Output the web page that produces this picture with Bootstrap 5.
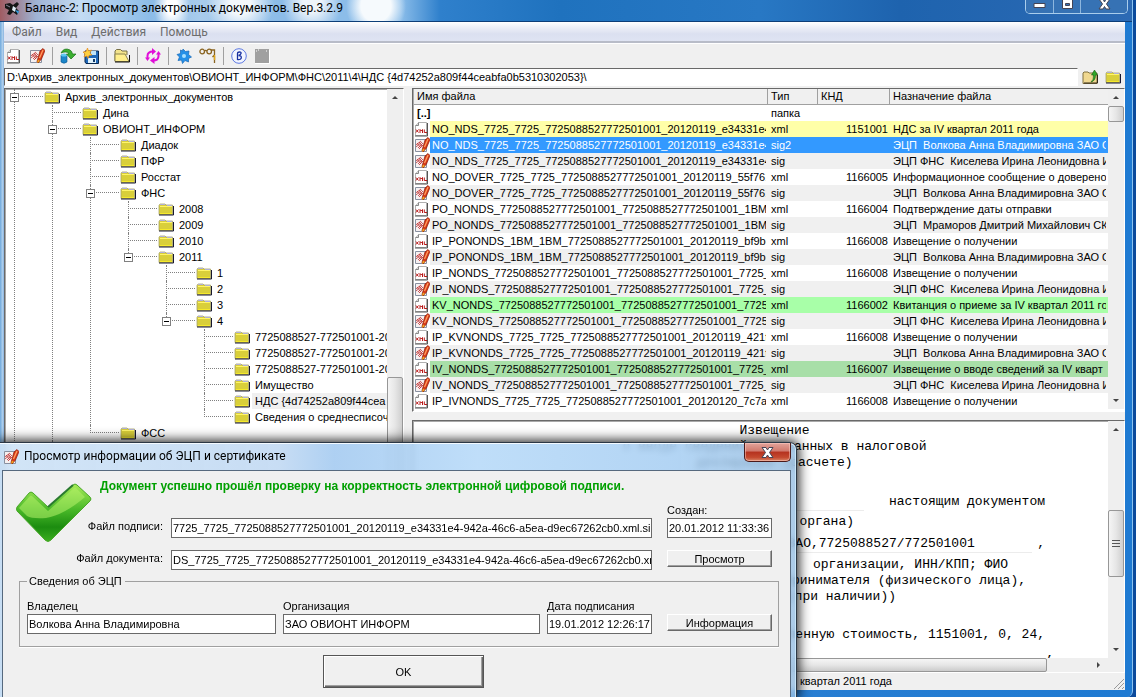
<!DOCTYPE html>
<html lang="ru">
<head>
<meta charset="utf-8">
<meta name="viewport" content="width=device-width, initial-scale=1">
<title>Баланс-2: Просмотр электронных документов</title>
<link href="https://cdn.jsdelivr.net/npm/bootstrap@5.3.0/dist/css/bootstrap.min.css" rel="stylesheet">
<style>
:root{--face:#f0f0f0;--dark:#696969;--mid:#a0a0a0}
body{font:11px/16px "Liberation Sans",Arial,sans-serif;color:#000;background:#0b4a9c}
svg{display:block;flex:none}
.app-window{height:100vh;margin-right:3px;padding:0 7px 7px 4px;border-right:1px solid #8cc4f0;border-radius:0 0 6px 0;
 background:linear-gradient(90deg,#6fa9dc 0,#b8d4ee 3px,#2b73c4 5px,#2b7fd2 60%,#1e7ad2 100%)}
.app-title{height:22px;margin:0 -7px 0 -4px;padding-left:4px;font:12px/17px Roboto,"Noto Sans",sans-serif;border-bottom:1px solid #0d3e78;
 background:radial-gradient(ellipse 18px 30px at 172px 6px,#fff 30%,transparent),radial-gradient(ellipse 34px 34px at 240px 4px,#f4f8fc 30%,transparent),
 radial-gradient(ellipse 30px 34px at 312px 2px,#eef4fa 30%,transparent),radial-gradient(ellipse 30px 32px at 376px 6px,#f6fafd 50%,transparent),
 linear-gradient(90deg,#a05c62 0,#9fb3d4 36px,#c4dcf4 80px,#8cbce8 150px,#a8ccec 200px,#8cbce8 280px,#8cbeea 400px,#2f80cc 440px,#1f72be 560px,#2878c4 760px,#1e63ae 900px,#2c6ab4 100%)}
.win-ctl{height:14px;margin-right:4px;border:1px solid #a9cdec;border-top:0;border-radius:0 0 5px 5px;overflow:hidden}
.win-ctl button{border:0;padding:0 0 4px;background:#3672b4;border-left:1px solid #8db6de;width:27px;display:flex;align-items:center;justify-content:center}
.win-ctl button:first-child{border-left:0}
.win-ctl button:last-child{width:47px}
.app-client{background:var(--face);min-height:0}
.app-menu{height:21px;background:linear-gradient(#fff 0,#eef0f8 5px,#dbe0f0 12px,#dfe4f3 100%);border-bottom:2px solid #b8bcc8;font:12px/20px Roboto,"Noto Sans",sans-serif}
.app-menu a{color:#6d6d6d;text-decoration:none}
.toolbar{height:25px;border-top:1px solid #fff;gap:7px}
.toolbar button,.ico-btn{border:0;background:none;padding:0}
.tsep{width:1px;height:18px;background:var(--mid)}
.path-box{height:18px;border:1px solid;border-color:var(--dark) #fff #fff var(--dark);background:#fff;padding:0 2px;outline:0;color:#000}
.sunken{background:#fff;border:1px solid;border-color:var(--dark) #fff #fff var(--dark);box-shadow:inset 1px 1px 0 #a9a9a9}
.tree-pane{width:400px}
.vbar{width:16px;background:#efefef;flex:none}
.arrow-up,.arrow-down,.arrow-right{width:16px;height:17px;display:flex;align-items:center;justify-content:center}
.arrow-up::before,.arrow-down::before,.arrow-right::before{content:"";border:3px solid transparent;border-top-width:0;border-bottom-color:#444}
.arrow-down::before{border-width:3px 3px 0;border-color:#444 transparent transparent}
.arrow-right::before{border-width:3px 0 3px 3px;border-color:transparent transparent transparent #444}
.thumb-v{border:1px solid #979797;border-radius:2px;background:linear-gradient(90deg,#f5f5f5,#e6e6e6 50%,#cfcfcf)}
.thumb-h{border:1px solid #979797;border-radius:2px;background:linear-gradient(#f5f5f5,#e6e6e6 50%,#cbcbcb);height:14px}
/* tree */
.tree-list{list-style:none;margin:0;padding:0}
.tree-list .tree-list{padding-left:38px}
.tree-list li{position:relative}
.tree-list li::before{content:"";position:absolute;left:9px;top:0;bottom:0;border-left:1px dotted #808080}
.tree-list .tree-list li:last-child::before{bottom:auto;height:8px}
.node-row{display:flex;height:16px;padding-left:9px;white-space:nowrap}
.node-row::before{content:"";width:29px;height:8px;border-bottom:1px dotted #808080;flex:none;margin-right:1px}
.node-row span{padding:0 3px;margin-left:2px;line-height:16px}
.node-row .picked{background:#f0f0f0;flex:1}
.has-kids>.node-row::after{content:"";position:absolute;left:5px;top:4px;width:9px;height:9px;border:1px solid #808080;
 background:linear-gradient(#000,#000) center/5px 1px no-repeat #fff}
/* file list */
.files{table-layout:fixed;width:100%;border-collapse:separate;border-spacing:0;white-space:pre}
.files th,.files td{height:16px;line-height:15px;padding:0 0 0 3px;overflow:hidden;font-weight:400}
.files td{border-right:2px solid transparent}
.files th{background:var(--face);border-right:1px solid var(--mid);border-bottom:1px solid var(--mid);padding-left:3px}
.files th:last-child{border-right:0}
.files td:first-child{padding:0;border-right:0}
.files td:nth-child(2){padding-left:2px}
.files td:nth-child(4){text-align:right}
.files .up-dir td{padding-left:3px}
.files .s td+td{background:#f0f0f0}
.files .y td+td{background:#ffffa8}
.files .sel td+td{background:#3399ff;color:#fff}
.files .g td+td{background:#a8ffa8}
.files .dg td+td{background:#a8dfa8}
/* document */
.doc-pane{min-height:0;min-width:0}
.doc-text{font:13px/16px "Liberation Mono","Courier New",monospace;padding:2px 0 0;overflow:hidden;min-width:0}
.doc-head,.doc-line{white-space:pre}
.doc-head{padding-left:28px;text-align:center}
.doc-line{text-align:right}
.ruled{border-bottom:1px solid #ececec}
.end-s{padding-right:63px}.end-m{padding-right:82px}.end-l{padding-right:100px}.end-xl{padding-right:212px}.end-xs{padding-right:54px}
/* dialog */
.sig-dialog{position:absolute;left:0;bottom:0;width:797px;border:1px solid #2c3846;border-left:0;border-bottom:0;border-radius:0 7px 0 0;padding:0 5px 0 2px;
 background:linear-gradient(90deg,rgba(205,226,246,.9) 0,rgba(190,215,242,.85) 35%,rgba(160,200,240,.85) 42%,rgba(180,216,248,.85) 60%,rgba(165,205,242,.85) 85%,rgba(150,190,226,.8) 100%);
 backdrop-filter:blur(3px);box-shadow:0 0 12px 2px rgba(0,0,0,.85),inset 0 1px 0 #f4faff,inset -1px 0 0 #c8e6fa}
.dlg-title{height:27px;font:12px/27px Roboto,"Noto Sans",sans-serif}
.dlg-close{width:47px;height:19px;border:1px solid #4b1a1a;border-top:0;border-radius:0 0 5px 5px;padding:0;
 background:linear-gradient(#e3a49b 0,#d0786c 45%,#b5321f 50%,#c4492f 80%,#d98668);box-shadow:inset 0 0 0 1px rgba(255,210,200,.5)}
.dlg-body{background:var(--face);border:1px solid #56697e;border-bottom:0;padding-bottom:9px}
.dlg-grid{display:grid;grid-template:16px 24px 20px 32px/147px 488px 105px;padding:7px 0 0 13px;column-gap:8px}
.dlg-grid .fit{margin-right:7px}
.ok-text{grid-area:1/1/2/4;padding-left:84px;color:#00a000;font-weight:700;font-size:12px}
.tick{grid-area:1/1/5/2;margin-top:4px}
.fld{border:1px solid var(--dark);background:#fff;height:20px;padding:0 0 0 1px;outline:0;color:#000;min-width:0;width:100%;line-height:18px}
.flat3d{height:17px;width:100%;border:1px solid;border-color:#fff var(--dark) var(--dark) #fff;background:var(--face);box-shadow:inset -1px -1px 0 var(--mid);padding:0;line-height:14px;color:#000}
.sig-group{margin:3px 11px 0 16px;border:1px solid var(--mid);padding:9px 6px 12px 7px;box-shadow:0 1px 0 #fff}
.sig-group legend{float:none;width:auto;font-size:11px;line-height:16px;margin:0;padding:0 3px 0 2px}
.sig-cols{display:grid;grid-template-columns:249px 257px 105px 105px;column-gap:7px}
.sig-cols>:last-child{margin-left:8px;width:105px}
.ok-btn{width:161px;height:33px;border:1px solid #555;background:var(--face);box-shadow:inset 1px 1px 0 #fff,inset -1px -1px 0 #696969,inset -2px -2px 0 #a0a0a0;margin-left:320px;color:#000}
</style>
</head>
<body class="vh-100 overflow-hidden position-relative">

<svg width="0" height="0" class="position-absolute" aria-hidden="true">
 <symbol id="i-folder" viewBox="0 0 16 16">
  <path d="M1 4.500L2 3h5l1 1h6.500v9.500H1z" fill="#d9cf3a" stroke="#a8a468" stroke-width=".8"/>
  <path d="M2 3.500h5M9 4.500h5" stroke="#b0b0d8"/><path d="M2 5.500h12" stroke="#fff56a"/>
  <path d="M2 12.500h12" stroke="#f6ea2a"/><path d="M1 14h14.500V5" fill="none" stroke="#181830"/>
 </symbol>
 <symbol id="i-xml" viewBox="0 0 16 16">
  <path d="M1.500 4.500l3-3h8v13h-11z" fill="#fff" stroke="#b0b0b0"/><path d="M1.500 4.500h3v-3" fill="#ddd" stroke="#888"/><path d="M13.500 2v13H1" fill="none" stroke="#555"/>
  <path d="M2 8.500l2.500 3M4.500 8.500L2 11.500M6 12V8.500l1.200 1.500 1.300-1.500V12M10.300 8.500v3H13" fill="none" stroke="#b81818"/>
 </symbol>
 <symbol id="i-sig" viewBox="0 0 16 16">
  <path d="M1.500 2.500h11v12h-11z" fill="#f6f0f0" stroke="#8890a0"/>
  <path d="M2 8l5-4M2 10l6-5M4 11l5-5M5 12l4-4M3 6l4 5M5 5l3 4" stroke="#c03030" stroke-width=".8"/>
  <path d="M8 13.500L11 3l3-2.500 2 2L12.500 11 9 15z" fill="#d83a18" stroke="#8a1a08" stroke-width=".7"/><path d="M10.500 10L14 2" stroke="#ffa060" stroke-width="1.200"/><path d="M8 15l1-3.500 2 1.500z" fill="#f0b020"/>
 </symbol>
 <symbol id="i-open" viewBox="0 0 16 16">
  <path d="M1 13V3l1.500-1.500h4L8 3h5v4" fill="#f3e48c" stroke="#777048"/><path d="M1 13.500L1 6h10l4 7.500z" fill="#ffef8c" stroke="#8c8450"/><path d="M1 14h14.500V7" fill="none" stroke="#111"/>
 </symbol>
</svg>

<div class="app-window d-flex flex-column">
 <header class="app-title d-flex align-items-start justify-content-between flex-shrink-0">
  <div class="d-flex gap-1">
   <svg width="17" height="16" viewBox="0 0 17 16"><path d="M1 4l5-1 3 2 4-3 2 2-3 4 3 3-2 4-4-3-3 3-3-1 2-4-4-2z" fill="#151515"/><path d="M9 6l3 2-1 4-3-2z" fill="#e0ecf4"/><path d="M11 10l4 1-1 3z" fill="#38a0e0"/><path d="M2 5l4 2" stroke="#889"/></svg>
   <span>Баланс-2: Просмотр электронных документов. Вер.3.2.9</span>
  </div>
  <div class="win-ctl d-flex">
   <button aria-label="Свернуть"><svg width="13" height="8"><path d="M1 2.500h11v4H1z" fill="#fff" stroke="#445"/></svg></button>
   <button aria-label="Развернуть"><svg width="13" height="11"><path d="M1.500.500h10v9h-10z M4.500 4.500h4v2h-4z" fill="#fff" fill-rule="evenodd" stroke="#445"/></svg></button>
   <button aria-label="Закрыть"><svg width="13" height="11"><path d="M1 0h4l1.500 3L8 0h4L8.500 5l3.500 5H8L6.500 7.500 5 10H1l3.500-5z" fill="#fff" stroke="#445"/></svg></button>
  </div>
 </header>

 <div class="app-client flex-grow-1 d-flex flex-column">
  <nav class="app-menu d-flex flex-shrink-0 ps-2" style="gap:14px">
   <a href="#">Файл</a><a href="#">Вид</a><a href="#">Действия</a><a href="#">Помощь</a>
  </nav>

  <div class="toolbar d-flex align-items-center flex-shrink-0" style="padding-left:2px">
   <button aria-label="XML"><svg width="16" height="16"><use href="#i-xml"/></svg></button>
   <button aria-label="Подпись"><svg width="16" height="16"><use href="#i-sig"/></svg></button>
   <i class="tsep"></i>
   <button aria-label="Извлечь"><svg width="16" height="16" viewBox="0 0 16 16"><path d="M1 7v7q3 2.500 6 0V7z" fill="#1c86c8" stroke="#0c5890" stroke-width=".6"/><ellipse cx="4" cy="7" rx="3" ry="1.500" fill="#60c8f0"/><path d="M1 5Q4-1 10 2q2 1 2.500 4H16l-5 5-4.500-5H9Q8 3.500 5 4 3 4 1 5z" fill="#3cb030" stroke="#187018" stroke-width=".7"/></svg></button>
   <button aria-label="Сохранить"><svg width="16" height="16" viewBox="0 0 16 16"><path d="M2 3h13.500v12.500H3L2 14z" fill="#2068b8" stroke="#082850"/><path d="M8 3h5v4H8z" fill="#bfe4f8"/><path d="M5 10h8v5H5z" fill="#dff2fc"/><path d="M10 11h2v3h-2z" fill="#103868"/><path d="M4.500 0l1 3 3-1-1.500 3 2 2-3 .5L5 10.500 4 8 1 9l1-3L0 4l3-.5z" fill="#ffd040" stroke="#e08010" stroke-width=".6"/></svg></button>
   <i class="tsep"></i>
   <button aria-label="Открыть"><svg width="16" height="16"><use href="#i-open"/></svg></button>
   <i class="tsep"></i>
   <button aria-label="Обновить"><svg width="16" height="16" viewBox="0 0 16 16"><path d="M2.500 10.500V8Q2.500 3.500 8 3.500" fill="none" stroke="#e010d8" stroke-width="2"/><path d="M7 0l4 3.500L7 7z" fill="#e010d8"/><path d="M13.500 5v3q0 4.500-5.500 4.500" fill="none" stroke="#e010d8" stroke-width="2"/><path d="M9.500 9v7L5 12.500zM11 6.500h5L13.500 3zM0 9.500h5L2.500 13z" fill="#e010d8"/></svg></button>
   <i class="tsep"></i>
   <button aria-label="Настройки"><svg width="16" height="16" viewBox="0 0 16 16"><path d="M7 1l2.500 2.500L13 3l-.5 3.500 3 2.500-3 1.500V14L9 12.500 6.500 15.500 5.500 12 2 12.500 3.500 9 1 6.500l3.500-1V2l2 1z" fill="#2490e8" stroke="#1868b8" stroke-width=".7"/><circle cx="8" cy="8" r="2" fill="#a8e0ff"/></svg></button>
   <button aria-label="Просмотр"><svg width="17" height="16" viewBox="0 0 17 16"><g fill="none" stroke="#8a6420" stroke-width="1.300"><circle cx="3.200" cy="3.500" r="2.300"/><circle cx="10.200" cy="3.500" r="2.300"/><path d="M5.500 3q1-1.200 2.400 0M12 2h3.500v5l-2 2M15.500 8v7"/></g><path d="M15.500 7v5" stroke="#e0a820" stroke-width="1.500"/></svg></button>
   <i class="tsep"></i>
   <button aria-label="Валидатор"><svg width="16" height="16" viewBox="0 0 16 16"><circle cx="8" cy="8" r="7.300" fill="#f2f5ff" stroke="#5c78e0"/><path d="M6.500 12V5.500q0-1.500 2-1.500t1.500 1.500T7.500 7.500M7.500 7.500q3 0 2.800 2.200T6.500 11.500" fill="none" stroke="#1830a0" stroke-width="1.300"/></svg></button>
   <button aria-label="Стоп"><svg width="16" height="16" viewBox="0 0 16 16"><path d="M1 1h14v14H1z" fill="#a0a0a0"/><path d="M2 3h1M4 2h1M12 3h1" stroke="#fff"/><path d="M15.500 2v13.500H1" fill="none" stroke="#fff"/></svg></button>
  </div>

  <div class="d-flex flex-shrink-0 align-items-center" style="padding-bottom:2px">
   <input class="path-box flex-grow-1" aria-label="Путь" value="D:\Архив_электронных_документов\ОВИОНТ_ИНФОРМ\ФНС\2011\4\НДС {4d74252a809f44ceabfa0b5310302053}\">
   <div class="d-flex" style="gap:7px;padding:0 4px">
    <button class="ico-btn" aria-label="Вверх"><svg width="16" height="16" viewBox="0 0 16 16"><path d="M1 4l1-1h4l1 1h8v10.500H1z" fill="#f0d890" stroke="#807040"/><path d="M2 14h13.500V6" fill="none" stroke="#302818"/><path d="M9 13q3-2 2.500-7H9.500L12.500 1l3 5h-2q0 6-4.500 7z" fill="#30a828" stroke="#145c10" stroke-width=".6"/></svg></button>
    <button class="ico-btn" aria-label="Папка"><svg width="16" height="16"><use href="#i-folder"/></svg></button>
   </div>
  </div>

  <main class="d-flex flex-grow-1" style="min-height:0">
   <section class="tree-pane sunken d-flex flex-shrink-0 overflow-hidden">
    <div class="flex-grow-1 overflow-hidden">
     <ul class="tree-list">
      <li class="has-kids"><div class="node-row"><svg width="16" height="16"><use href="#i-folder"/></svg><span>Архив_электронных_документов</span></div>
       <ul class="tree-list">
        <li><div class="node-row"><svg width="16" height="16"><use href="#i-folder"/></svg><span>Дина</span></div></li>
        <li class="has-kids"><div class="node-row"><svg width="16" height="16"><use href="#i-folder"/></svg><span>ОВИОНТ_ИНФОРМ</span></div>
         <ul class="tree-list">
          <li><div class="node-row"><svg width="16" height="16"><use href="#i-folder"/></svg><span>Диадок</span></div></li>
          <li><div class="node-row"><svg width="16" height="16"><use href="#i-folder"/></svg><span>ПФР</span></div></li>
          <li><div class="node-row"><svg width="16" height="16"><use href="#i-folder"/></svg><span>Росстат</span></div></li>
          <li class="has-kids"><div class="node-row"><svg width="16" height="16"><use href="#i-folder"/></svg><span>ФНС</span></div>
           <ul class="tree-list">
            <li><div class="node-row"><svg width="16" height="16"><use href="#i-folder"/></svg><span>2008</span></div></li>
            <li><div class="node-row"><svg width="16" height="16"><use href="#i-folder"/></svg><span>2009</span></div></li>
            <li><div class="node-row"><svg width="16" height="16"><use href="#i-folder"/></svg><span>2010</span></div></li>
            <li class="has-kids"><div class="node-row"><svg width="16" height="16"><use href="#i-folder"/></svg><span>2011</span></div>
             <ul class="tree-list">
              <li><div class="node-row"><svg width="16" height="16"><use href="#i-folder"/></svg><span>1</span></div></li>
              <li><div class="node-row"><svg width="16" height="16"><use href="#i-folder"/></svg><span>2</span></div></li>
              <li><div class="node-row"><svg width="16" height="16"><use href="#i-folder"/></svg><span>3</span></div></li>
              <li class="has-kids"><div class="node-row"><svg width="16" height="16"><use href="#i-folder"/></svg><span>4</span></div>
               <ul class="tree-list">
                <li><div class="node-row"><svg width="16" height="16"><use href="#i-folder"/></svg><span>7725088527-772501001-20</span></div></li>
                <li><div class="node-row"><svg width="16" height="16"><use href="#i-folder"/></svg><span>7725088527-772501001-20</span></div></li>
                <li><div class="node-row"><svg width="16" height="16"><use href="#i-folder"/></svg><span>7725088527-772501001-20</span></div></li>
                <li><div class="node-row"><svg width="16" height="16"><use href="#i-folder"/></svg><span>Имущество</span></div></li>
                <li><div class="node-row"><svg width="16" height="16"><use href="#i-folder"/></svg><span class="picked">НДС {4d74252a809f44cea</span></div></li>
                <li><div class="node-row"><svg width="16" height="16"><use href="#i-folder"/></svg><span>Сведения о среднесписоч</span></div></li>
               </ul></li>
             </ul></li>
           </ul></li>
          <li><div class="node-row"><svg width="16" height="16"><use href="#i-folder"/></svg><span>ФСС</span></div></li>
         </ul></li>
        <li style="height:300px"></li>
       </ul></li>
     </ul>
    </div>
    <div class="vbar d-flex flex-column"><i class="arrow-up"></i><div class="flex-grow-1"></div><div class="thumb-v" style="height:52%"></div></div>
   </section>

   <div class="d-flex flex-column flex-grow-1" style="min-width:0;padding-left:8px">
    <section class="sunken d-flex flex-shrink-0" style="padding:0 0 2px 1px">
     <table class="files flex-grow-1">
      <colgroup><col style="width:16px"><col style="width:338px"><col style="width:50px"><col style="width:72px"><col></colgroup>
      <thead><tr><th colspan="2">Имя файла</th><th>Тип</th><th>КНД</th><th>Назначение файла</th></tr></thead>
      <tbody>
       <tr class="up-dir"><td colspan="2"><b>[..]</b></td><td>папка</td><td></td><td></td></tr>
       <tr class="y"><td><svg width="16" height="16"><use href="#i-xml"/></svg></td><td>NO_NDS_7725_7725_7725088527772501001_20120119_e34331e4</td><td>xml</td><td>1151001</td><td>НДС за IV квартал 2011 года</td></tr>
       <tr class="sel"><td><svg width="16" height="16"><use href="#i-sig"/></svg></td><td>NO_NDS_7725_7725_7725088527772501001_20120119_e34331e4</td><td>sig2</td><td></td><td>ЭЦП  Волкова Анна Владимировна ЗАО О</td></tr>
       <tr class="s"><td><svg width="16" height="16"><use href="#i-sig"/></svg></td><td>NO_NDS_7725_7725_7725088527772501001_20120119_e34331e4</td><td>sig</td><td></td><td>ЭЦП ФНС  Киселева Ирина Леонидовна И</td></tr>
       <tr><td><svg width="16" height="16"><use href="#i-xml"/></svg></td><td>NO_DOVER_7725_7725_7725088527772501001_20120119_55f761</td><td>xml</td><td>1166005</td><td>Информационное сообщение о доверенос</td></tr>
       <tr class="s"><td><svg width="16" height="16"><use href="#i-sig"/></svg></td><td>NO_DOVER_7725_7725_7725088527772501001_20120119_55f761</td><td>sig</td><td></td><td>ЭЦП  Волкова Анна Владимировна ЗАО О</td></tr>
       <tr><td><svg width="16" height="16"><use href="#i-xml"/></svg></td><td>PO_NONDS_7725088527772501001_7725088527772501001_1BM_</td><td>xml</td><td>1166004</td><td>Подтверждение даты отправки</td></tr>
       <tr class="s"><td><svg width="16" height="16"><use href="#i-sig"/></svg></td><td>PO_NONDS_7725088527772501001_7725088527772501001_1BM_</td><td>sig</td><td></td><td>ЭЦП  Мраморов Дмитрий Михайлович СК</td></tr>
       <tr><td><svg width="16" height="16"><use href="#i-xml"/></svg></td><td>IP_PONONDS_1BM_1BM_7725088527772501001_20120119_bf9bc</td><td>xml</td><td>1166008</td><td>Извещение о получении</td></tr>
       <tr class="s"><td><svg width="16" height="16"><use href="#i-sig"/></svg></td><td>IP_PONONDS_1BM_1BM_7725088527772501001_20120119_bf9bc</td><td>sig</td><td></td><td>ЭЦП  Волкова Анна Владимировна ЗАО О</td></tr>
       <tr><td><svg width="16" height="16"><use href="#i-xml"/></svg></td><td>IP_NONDS_7725088527772501001_7725088527772501001_7725_2</td><td>xml</td><td>1166008</td><td>Извещение о получении</td></tr>
       <tr class="s"><td><svg width="16" height="16"><use href="#i-sig"/></svg></td><td>IP_NONDS_7725088527772501001_7725088527772501001_7725_2</td><td>sig</td><td></td><td>ЭЦП ФНС  Киселева Ирина Леонидовна И</td></tr>
       <tr class="g"><td><svg width="16" height="16"><use href="#i-xml"/></svg></td><td>KV_NONDS_7725088527772501001_7725088527772501001_7725_</td><td>xml</td><td>1166002</td><td>Квитанция о приеме за IV квартал 2011 го</td></tr>
       <tr class="s"><td><svg width="16" height="16"><use href="#i-sig"/></svg></td><td>KV_NONDS_7725088527772501001_7725088527772501001_7725_</td><td>sig</td><td></td><td>ЭЦП ФНС  Киселева Ирина Леонидовна И</td></tr>
       <tr><td><svg width="16" height="16"><use href="#i-xml"/></svg></td><td>IP_KVNONDS_7725_7725_7725088527772501001_20120119_421fc</td><td>xml</td><td>1166008</td><td>Извещение о получении</td></tr>
       <tr class="s"><td><svg width="16" height="16"><use href="#i-sig"/></svg></td><td>IP_KVNONDS_7725_7725_7725088527772501001_20120119_421fc</td><td>sig</td><td></td><td>ЭЦП  Волкова Анна Владимировна ЗАО О</td></tr>
       <tr class="dg"><td><svg width="16" height="16"><use href="#i-xml"/></svg></td><td>IV_NONDS_7725088527772501001_7725088527772501001_7725_2</td><td>xml</td><td>1166007</td><td>Извещение о вводе сведений за IV кварт</td></tr>
       <tr class="s"><td><svg width="16" height="16"><use href="#i-sig"/></svg></td><td>IV_NONDS_7725088527772501001_7725088527772501001_7725_2</td><td>sig</td><td></td><td>ЭЦП ФНС  Киселева Ирина Леонидовна И</td></tr>
       <tr><td><svg width="16" height="16"><use href="#i-xml"/></svg></td><td>IP_IVNONDS_7725_7725_7725088527772501001_20120120_7c7a2</td><td>xml</td><td>1166008</td><td>Извещение о получении</td></tr>
      </tbody>
     </table>
     <div class="vbar d-flex flex-column"><i class="arrow-up"></i><div class="thumb-v" style="height:16px"></div><div class="flex-grow-1"></div><i class="arrow-down"></i></div>
    </section>

    <section class="doc-pane sunken d-flex flex-column flex-grow-1" style="margin-top:8px">
     <div class="d-flex flex-grow-1" style="min-height:0">
      <div class="doc-text flex-grow-1">
       <div class="doc-head">Извещение
о вводе сведений, указанных в налоговой
декларации (расчете)</div>
       <div class="doc-line end-s" style="padding-top:23px">настоящим документом</div>
       <div class="ruled" style="margin-right:244px"></div>
       <div class="doc-line" style="padding-right:254px;padding-top:3px">органа)</div>
       <div class="doc-line end-s" style="padding-top:6px">ЗАО,7725088527/772501001        ,</div>
       <div class="ruled" style="margin-right:76px"></div>
       <div class="doc-line end-l" style="padding-top:4px">организации, ИНН/КПП; ФИО</div>
       <div class="doc-line end-m">предпринимателя (физического лица),</div>
       <div class="doc-line end-xl">(при наличии))</div>
       <div class="doc-line end-s" style="padding-top:22px">добавленную стоимость, 1151001, 0, 24,</div>
       <div class="doc-line end-xs" style="padding-top:3px">,</div>
      </div>
      <div class="vbar d-flex flex-column"><i class="arrow-up"></i><div style="height:72px"></div><div class="thumb-v d-flex align-items-center justify-content-center" style="height:67px"><svg width="8" height="8"><path d="M0 .5h8M0 3.500h8M0 6.500h8" stroke="#555"/></svg></div><div class="flex-grow-1"></div><i class="arrow-down"></i></div>
     </div>
     <div class="d-flex flex-shrink-0" style="background:#efefef"><div class="thumb-h flex-grow-1"></div><div style="width:43px"></div><i class="arrow-right" style="height:14px"></i><div style="width:18px"></div></div>
    </section>
    <footer class="d-flex justify-content-between flex-shrink-0" style="height:17px;padding-left:388px"><span>квартал 2011 года</span>
     <svg width="12" height="17"><path d="M1 16L11 6M5 16l6-6M9 16l2-2" stroke="#999"/></svg></footer>
   </div>
  </main>
 </div>
</div>

<section class="sig-dialog" role="dialog" aria-label="Просмотр информации об ЭЦП и сертификате">
 <header class="dlg-title d-flex justify-content-between align-items-start">
  <div class="d-flex align-items-center" style="gap:5px;padding-left:1px"><svg width="16" height="16"><use href="#i-sig"/></svg><span>Просмотр информации об ЭЦП и сертификате</span></div>
  <button class="dlg-close d-flex align-items-center justify-content-center" aria-label="Закрыть"><svg width="13" height="11"><path d="M1 .5h4l1.500 2.500L8 .5h4L8.500 5.500l3.500 5H8L6.500 8 5 10.500H1l3.500-5z" fill="#fff" stroke="#445"/></svg></button>
 </header>
 <div class="dlg-body">
  <div class="dlg-grid">
   <svg class="tick" width="76" height="62" viewBox="0 0 76 62"><defs><linearGradient id="tg" x1="0" y1="0" x2="0" y2="1"><stop offset="0" stop-color="#a8ec58"/><stop offset=".45" stop-color="#48b828"/><stop offset=".75" stop-color="#1c8c10"/><stop offset="1" stop-color="#3cae20"/></linearGradient></defs>
    <path d="M1 25L13 11q2-2 4 0L32 25 57 3q2-2 4 0l13 12q2 2 0 4L35 58q-3 3-6 0L1 29q-1-2 0-4z" fill="url(#tg)" stroke="#49a828"/>
    <path d="M3 26L14 14q1-1 2 0l16 15L58 6q1-1 2 0l9 9Q48 33 30 36 16 37 11 34z" fill="#b4f06a" opacity=".55"/><path d="M32 25L57 3" stroke="#2a7a30" stroke-width="2"/></svg>
   <div class="ok-text">Документ успешно прошёл проверку на корректность электронной цифровой подписи.</div>
   <label for="fDate" style="grid-area:2/3" class="align-self-end">Создан:</label>
   <label for="fSig" style="grid-area:3/1" class="text-end">Файл подписи:</label>
   <div style="grid-area:3/2" class="fit"><input id="fSig" class="fld d-block" value="7725_7725_7725088527772501001_20120119_e34331e4-942a-46c6-a5ea-d9ec67262cb0.xml.sig2"></div>
   <input id="fDate" class="fld" style="grid-area:3/3" value="20.01.2012 11:33:36">
   <label for="fDoc" style="grid-area:4/1;padding-top:12px" class="text-end">Файл документа:</label>
   <div style="grid-area:4/2;padding-top:12px" class="fit"><input id="fDoc" class="fld d-block" value="DS_7725_7725_7725088527772501001_20120119_e34331e4-942a-46c6-a5ea-d9ec67262cb0.xml"></div>
   <div style="grid-area:4/3;padding-top:12px"><button class="flat3d d-block">Просмотр</button></div>
  </div>
  <fieldset class="sig-group">
   <legend>Сведения об ЭЦП</legend>
   <div class="sig-cols">
    <div><label for="fOwn" class="d-block">Владелец</label><input id="fOwn" class="fld d-block" value="Волкова Анна Владимировна"></div>
    <div><label for="fOrg" class="d-block">Организация</label><input id="fOrg" class="fld d-block" value="ЗАО ОВИОНТ ИНФОРМ"></div>
    <div><label for="fSgn" class="d-block">Дата подписания</label><input id="fSgn" class="fld d-block" value="19.01.2012 12:26:17"></div>
    <div style="padding-top:16px"><button class="flat3d d-block">Информация</button></div>
   </div>
  </fieldset>
  <button class="ok-btn d-block" style="margin-top:8px">OK</button>
 </div>
</section>

<script src="https://cdn.jsdelivr.net/npm/bootstrap@5.3.0/dist/js/bootstrap.bundle.min.js"></script>
</body>
</html>
